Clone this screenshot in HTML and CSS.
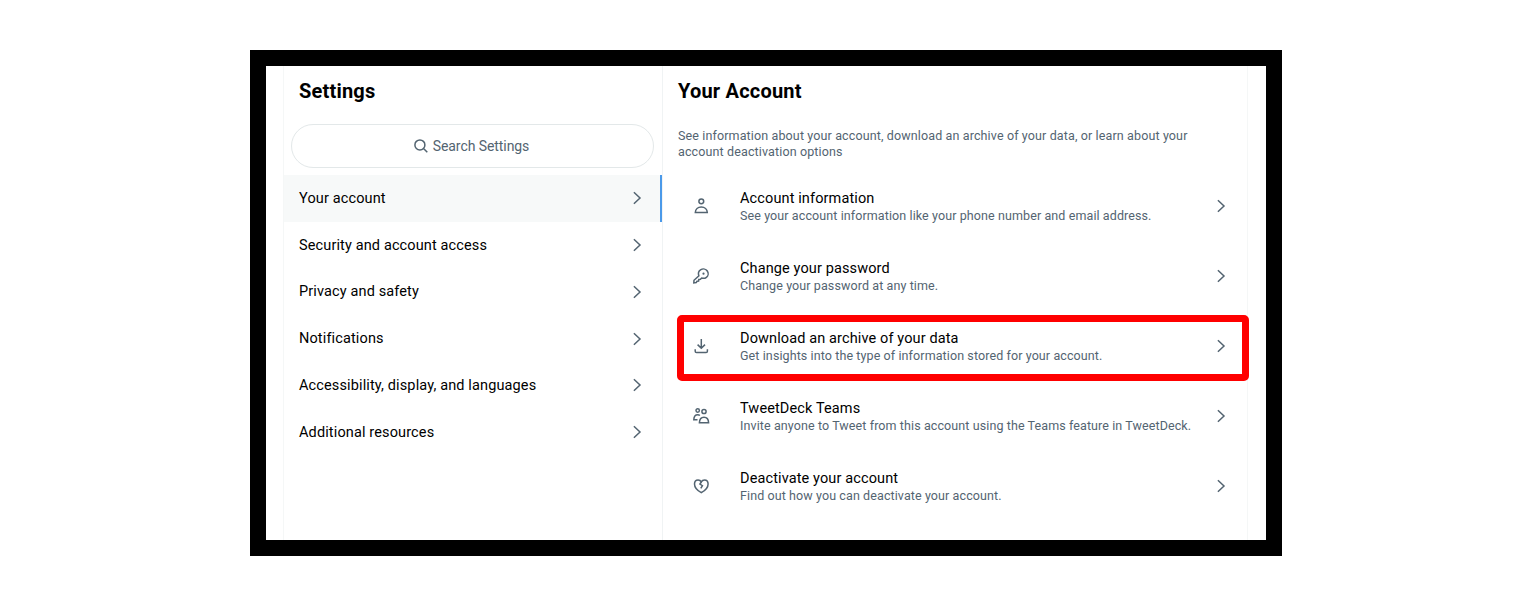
FILE: index.html
```
<!DOCTYPE html>
<html lang="en">
<head>
    <meta charset="UTF-8">
    <meta name="viewport" content="width=device-width, initial-scale=1.0">
    <title>Settings</title>
    <link rel="stylesheet" href="styles.css">
</head>
<body>
    <svg class="sprite" aria-hidden="true">
        <symbol id="chevron" viewBox="0 0 10 14"><path d="M1.900 1.200 8 7l-6.100 5.800"/></symbol>
    </svg>
    <div class="container">
        <aside class="sidebar">
            <h2>Settings</h2>
            <div class="search">
                <svg class="search-icon" viewBox="0 0 14 14"><circle cx="5.9" cy="5.9" r="5"/><path d="m9.5 9.5 3.8 3.8"/></svg>
                <span>Search Settings</span>
            </div>
            <nav>
                <a class="nav-item active"><span>Your account</span><svg class="chevron"><use href="#chevron"/></svg></a>
                <a class="nav-item"><span>Security and account access</span><svg class="chevron"><use href="#chevron"/></svg></a>
                <a class="nav-item"><span>Privacy and safety</span><svg class="chevron"><use href="#chevron"/></svg></a>
                <a class="nav-item"><span>Notifications</span><svg class="chevron"><use href="#chevron"/></svg></a>
                <a class="nav-item"><span>Accessibility, display, and languages</span><svg class="chevron"><use href="#chevron"/></svg></a>
                <a class="nav-item"><span>Additional resources</span><svg class="chevron"><use href="#chevron"/></svg></a>
            </nav>
        </aside>
        <main class="content">
            <h2>Your Account</h2>
            <p class="intro">See information about your account, download an archive of your data, or learn about your<br>account deactivation options</p>

            <div class="option">
                <svg class="icon" viewBox="0 0 18 18"><circle cx="9.300" cy="4.300" r="2.400"/><path d="M3.300 15.600c.1-3.400 2.600-5.600 6-5.600s5.900 2.200 6 5.600z"/></svg>
                <div class="text">
                    <h3>Account information</h3>
                    <p>See your account information like your phone number and email address.</p>
                </div>
                <svg class="chevron"><use href="#chevron"/></svg>
            </div>
            <div class="option">
                <svg class="icon" viewBox="0 0 18 18"><path d="M6.900 8.900C5.900 6.300 6.800 3.900 8.900 2.700c2.200-1.300 5-.7 6.400 1.300 1.400 2.100 1 4.900-.9 6.300-1.400 1.100-3.100 1.300-4.700.7l-1.300 1.300-1.600.1-.2 1.700-1.600.2-.8 1.300-2.400.3.200-2.600z"/><circle class="dot" cx="11.500" cy="6.700" r="1.100"/></svg>
                <div class="text">
                    <h3>Change your password</h3>
                    <p>Change your password at any time.</p>
                </div>
                <svg class="chevron"><use href="#chevron"/></svg>
            </div>
            <div class="option highlight">
                <svg class="icon" viewBox="0 0 18 18"><path d="M9.300 2v9.200M5.600 7.600l3.700 3.700L13 7.600M3.200 12.200v2c0 .8.500 1.300 1.300 1.300h9.600c.8 0 1.300-.5 1.300-1.300v-2"/></svg>
                <div class="text">
                    <h3>Download an archive of your data</h3>
                    <p>Get insights into the type of information stored for your account.</p>
                </div>
                <svg class="chevron"><use href="#chevron"/></svg>
            </div>
            <div class="option">
                <svg class="icon" viewBox="0 0 18 18"><circle cx="5.700" cy="3.500" r="1.700"/><circle cx="12" cy="4.500" r="2.100"/><path d="M7.400 15.800c.1-3.400 1.800-5.500 4.600-5.500s4.500 2.100 4.600 5.500zM5.500 12.800H1.800c.1-3.100 1.500-5 3.900-5 .9 0 1.600.2 2.200.7"/></svg>
                <div class="text">
                    <h3>TweetDeck Teams</h3>
                    <p>Invite anyone to Tweet from this account using the Teams feature in TweetDeck.</p>
                </div>
                <svg class="chevron"><use href="#chevron"/></svg>
            </div>
            <div class="option">
                <svg class="icon" viewBox="0 0 18 18"><path d="M9.300 15.700C5.300 13.500 2.500 10.500 2.500 7c0-2.400 1.600-4.100 3.600-4.100 1.300 0 2.500.7 3.200 2 .7-1.300 1.900-2 3.200-2 2 0 3.600 1.700 3.600 4.100 0 3.500-2.800 6.500-6.800 8.700z"/><path d="M9.300 4.900 7.900 7.100l2.500 1.600-1.600 2.600"/></svg>
                <div class="text">
                    <h3>Deactivate your account</h3>
                    <p>Find out how you can deactivate your account.</p>
                </div>
                <svg class="chevron"><use href="#chevron"/></svg>
            </div>
        </main>
    </div>
</body>
</html>
```
FILE: styles.css
```
* {
    box-sizing: border-box;
}
body {
    margin: 0;
    padding: 50px 250px;
    background: white;
    color: #0f1419;
    font-family: Roboto, Arial, sans-serif;
}
h2, h3, p {
    margin: 0;
}
svg {
    display: block;
    flex: none;
    fill: none;
    stroke: #536471;
    stroke-width: 1.5;
}
.sprite {
    position: absolute;
    width: 0;
    height: 0;
}
.container {
    display: flex;
    width: 1032px;
    height: 506px;
    padding: 0 17px;
    border: 16px solid black;
    overflow: hidden;
}
.sidebar {
    width: 380px;
    border-left: 1px solid #f5f7f7;
    border-right: 1px solid #f0f3f4;
}
h2 {
    padding: 13px 15px 0;
    color: black;
    font-size: 20px;
    font-weight: 700;
    line-height: 24px;
    letter-spacing: 0.2px;
}
.search {
    display: flex;
    align-items: center;
    justify-content: center;
    gap: 5px;
    width: 363px;
    height: 44px;
    margin: 21px 0 7px 7px;
    padding-right: 2px;
    border: 1px solid #e3e8e9;
    border-radius: 22px;
    color: #536471;
    font-size: 14px;
    letter-spacing: -0.07px;
}
.search-icon {
    width: 14px;
    height: 14px;
}
.nav-item {
    display: flex;
    align-items: center;
    justify-content: space-between;
    height: 46.75px;
    padding: 0 20px 0 15px;
    color: black;
    font-size: 14.5px;
    letter-spacing: 0.13px;
}
.active {
    padding-right: 18px;
    border-right: 2px solid #4a99e9;
    background: #f7f9f9;
}
.chevron {
    width: 10px;
    height: 14px;
}
.content {
    width: 585px;
    border-right: 1px solid #f5f7f7;
}
.intro {
    padding: 25px 15px 11px;
    color: #536471;
    font-size: 12.5px;
    line-height: 16px;
    letter-spacing: 0.13px;
}
.option {
    display: flex;
    align-items: center;
    height: 70px;
    padding: 0 21px 0 29px;
}
.icon {
    width: 18px;
    height: 18px;
    margin-right: 30px;
}
.dot {
    fill: #536471;
    stroke: none;
}
.text {
    flex: 1;
    padding-top: 2px;
    white-space: nowrap;
}
.text h3 {
    color: black;
    font-size: 14.5px;
    font-weight: 400;
    line-height: 18px;
    letter-spacing: 0.12px;
}
.text p {
    color: #536471;
    font-size: 12.5px;
    line-height: 16px;
    letter-spacing: 0.1px;
}
.highlight {
    position: relative;
}
/* red frame drawn over the row */
.highlight::after {
    content: "";
    box-sizing: border-box;
    position: absolute;
    top: 4px;
    left: 14px;
    width: 572px;
    height: 66px;
    border: 7px solid red;
    border-radius: 5px;
}
```
